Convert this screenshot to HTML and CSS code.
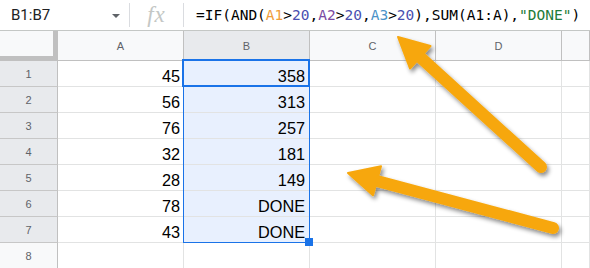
FILE: index.html
```html
<!DOCTYPE html>
<html>
<head>
<meta charset="utf-8">
<link rel="stylesheet" href="styles.css">
</head>
<body>
<div class="app">
  <div class="fbar">
    <div class="namebox"><span class="nb-text">B1:B7</span><span class="nb-caret"></span></div>
    <div class="sep"></div>
    <div class="fx">fx</div>
    <div class="sep"></div>
    <div class="formula">=IF(AND(<span class="r1">A1</span>&gt;<span class="n">20</span>,<span class="r2">A2</span>&gt;<span class="n">20</span>,<span class="r3">A3</span>&gt;<span class="n">20</span>),SUM(A1:A),<span class="s">"DONE"</span>)</div>
  </div>
  <div class="grid">
    <div class="corner"></div>
    <div class="ch">A</div>
    <div class="ch on">B</div>
    <div class="ch">C</div>
    <div class="ch">D</div>
    <div class="ch"></div>

    <div class="rh on">1</div><div class="c">45</div><div class="c sel">358</div><div class="c"></div><div class="c"></div><div class="c"></div>
    <div class="rh on">2</div><div class="c">56</div><div class="c sel">313</div><div class="c"></div><div class="c"></div><div class="c"></div>
    <div class="rh on">3</div><div class="c">76</div><div class="c sel">257</div><div class="c"></div><div class="c"></div><div class="c"></div>
    <div class="rh on">4</div><div class="c">32</div><div class="c sel">181</div><div class="c"></div><div class="c"></div><div class="c"></div>
    <div class="rh on">5</div><div class="c">28</div><div class="c sel">149</div><div class="c"></div><div class="c"></div><div class="c"></div>
    <div class="rh on">6</div><div class="c">78</div><div class="c sel">DONE</div><div class="c"></div><div class="c"></div><div class="c"></div>
    <div class="rh on">7</div><div class="c">43</div><div class="c sel">DONE</div><div class="c"></div><div class="c"></div><div class="c"></div>
    <div class="rh">8</div><div class="c"></div><div class="c"></div><div class="c"></div><div class="c"></div><div class="c"></div>

    <div class="range"></div>
    <div class="active"></div>
    <div class="handle"></div>
  </div>
  <svg class="arrows" width="590" height="268" viewBox="0 0 590 268">
    <defs>
      <filter id="sh" x="-20%" y="-20%" width="150%" height="150%">
        <feDropShadow dx="2" dy="3" stdDeviation="2.2" flood-color="#000" flood-opacity="0.45"/>
      </filter>
    </defs>
    <g fill="#f7a70d" stroke="#f7a70d" filter="url(#sh)">
      <line x1="541" y1="167" x2="420" y2="57" stroke-width="12" stroke-linecap="round"/>
      <polygon points="398,37 430.5,46 410,68.5" stroke-width="2" stroke-linejoin="round"/>
    </g>
    <g fill="#f7a70d" stroke="#f7a70d" filter="url(#sh)">
      <line x1="553" y1="228" x2="377" y2="181" stroke-width="12" stroke-linecap="round"/>
      <polygon points="348,173 381,166.3 373,195.3" stroke-width="2" stroke-linejoin="round"/>
    </g>
  </svg>
</div>
</body>
</html>
```

FILE: styles.css
```css
html, body {
  margin: 0;
  padding: 0;
  background: #fff;
}
.app {
  position: relative;
  width: 590px;
  height: 268px;
  overflow: hidden;
  font-family: "Liberation Sans", Arial, sans-serif;
}
.fbar {
  display: flex;
  align-items: center;
  height: 30px;
  border-bottom: 1px solid #c4c7c5;
  background: #fff;
}
.namebox {
  width: 129px;
  height: 30px;
  display: flex;
  align-items: center;
  box-sizing: border-box;
  padding-left: 11px;
  padding-right: 9px;
}
.nb-text {
  font-family: Roboto, "Liberation Sans", sans-serif;
  font-size: 15px;
  color: #202124;
}
.nb-caret {
  margin-left: auto;
  width: 0;
  height: 0;
  border-left: 4px solid transparent;
  border-right: 4px solid transparent;
  border-top: 4px solid #5f6368;
  margin-top: 2px;
}
.sep {
  width: 1px;
  height: 24px;
  background: #dadce0;
}
.fx {
  width: 53px;
  text-align: center;
  font-family: "Liberation Serif", serif;
  font-style: italic;
  font-size: 23px;
  letter-spacing: 1px;
  color: #c4c7c5;
  line-height: 30px;
}
.formula {
  padding-left: 12px;
  font-family: "DejaVu Sans Mono", "Liberation Mono", monospace;
  font-size: 14.5px;
  color: #000;
  white-space: nowrap;
}
.r1 { color: #f09d3a; }
.r2 { color: #7b4aa3; }
.r3 { color: #4b93c8; }
.n { color: #4a4fb0; }
.s { color: #1e7b3a; }

.grid {
  position: relative;
  display: grid;
  grid-template-columns: 58px 126px 126px 126px 126px 1fr;
  grid-template-rows: 30px repeat(8, 26px);
}
.grid > div {
  box-sizing: border-box;
}
.corner {
  background: #f8f9fa;
  border-right: 5px solid #c0c0c0;
  border-bottom: 5px solid #c0c0c0;
}
.ch {
  background: #f8f9fa;
  border-right: 1px solid #c0c0c0;
  border-bottom: 1px solid #c0c0c0;
  font-size: 11px;
  color: #5f6368;
  display: flex;
  align-items: center;
  justify-content: center;
}
.ch.on { background: #e8eaed; }
.rh {
  background: #f8f9fa;
  border-right: 1px solid #c0c0c0;
  border-bottom: 1px solid #c7c7c7;
  font-size: 11px;
  color: #5f6368;
  display: flex;
  align-items: center;
  justify-content: center;
}
.rh.on { background: #e8eaed; }
.c {
  border-right: 1px solid #e2e3e3;
  border-bottom: 1px solid #e2e3e3;
  font-size: 16.3px;
  line-height: 18px;
  color: #000;
  display: flex;
  align-items: flex-end;
  justify-content: flex-end;
  padding: 0 3px 1px 0;
}
.c.sel { background: #e8f0fe; padding-right: 4px; }
.range {
  position: absolute;
  grid-column: 3 / 4;
  grid-row: 2 / 9;
  top: -1px;
  left: -1px;
  right: 0;
  bottom: 0;
  border: 1px solid #1a73e8;
}
.active {
  position: absolute;
  grid-column: 3 / 4;
  grid-row: 2 / 3;
  top: -2px;
  left: -2px;
  right: 0;
  bottom: 0;
  border: 2px solid #1a73e8;
}
.handle {
  position: absolute;
  grid-column: 3 / 4;
  grid-row: 8 / 9;
  right: -3px;
  bottom: -3px;
  width: 8px;
  height: 8px;
  background: #1a73e8;
}
.arrows {
  position: absolute;
  left: 0;
  top: 0;
  pointer-events: none;
}
```
